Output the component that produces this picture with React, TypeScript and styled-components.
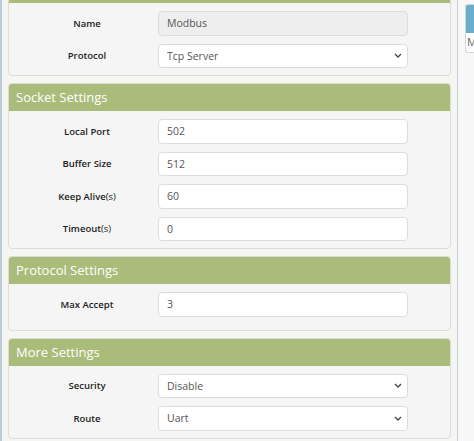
import styled, { createGlobalStyle } from 'styled-components';

const GlobalStyle = createGlobalStyle`
  html, body {
    margin: 0;
    padding: 0;
    background: #f5f6f1;
    font-family: 'Open Sans', 'Noto Sans', sans-serif;
    overflow: hidden;
  }
`;

interface Field {
  label: string;
  unit?: string;
  value: string;
  kind?: 'text' | 'select' | 'disabled';
}

interface Section {
  title: string;
  fields: Field[];
  extra?: boolean;
}

// first panel is scrolled up, only the bottom of its header shows
const sections: Section[] = [
  {
    title: '',
    fields: [
      { label: 'Name', value: 'Modbus', kind: 'disabled' },
      { label: 'Protocol', value: 'Tcp Server', kind: 'select' },
    ],
  },
  {
    title: 'Socket Settings',
    fields: [
      { label: 'Local Port', value: '502' },
      { label: 'Buffer Size', value: '512' },
      { label: 'Keep Alive', unit: '(s)', value: '60' },
      { label: 'Timeout', unit: '(s)', value: '0' },
    ],
  },
  {
    title: 'Protocol Settings',
    fields: [{ label: 'Max Accept', value: '3' }],
    extra: true,
  },
  {
    title: 'More Settings',
    fields: [
      { label: 'Security', value: 'Disable', kind: 'select' },
      { label: 'Route', value: 'Uart', kind: 'select' },
    ],
  },
];

function Chevron() {
  return (
    <svg width="8" height="5" viewBox="0 0 8 5" fill="none">
      <path d="M1 1l3 3 3-3" stroke="#444" strokeWidth="1.3" />
    </svg>
  );
}

function App() {
  return (
    <>
      <GlobalStyle />
      <Page>
        <LeftRule />
        <Main>
          {sections.map((section, i) => (
            <Panel key={i}>
              <PanelHeader>{section.title}</PanelHeader>
              <PanelBody extra={section.extra}>
                {section.fields.map((field) => (
                  <Row key={field.label}>
                    <Label>
                      {field.label}
                      {field.unit && <Unit>{field.unit}</Unit>}
                    </Label>
                    <Control disabled={field.kind === 'disabled'}>
                      <span>{field.value}</span>
                      {field.kind === 'select' && <Chevron />}
                    </Control>
                  </Row>
                ))}
              </PanelBody>
            </Panel>
          ))}
        </Main>
        <RightRule />
        <Side>
          <SideCard>
            <SideHeader />
            <SideBody>M</SideBody>
          </SideCard>
        </Side>
      </Page>
    </>
  );
}

export default App;

const Page = styled.div`
  display: flex;
  width: 474px;
  height: 441px;
  overflow: hidden;
`;

const LeftRule = styled.div`
  width: 2px;
  flex-shrink: 0;
  background: #bccbdc;
`;

const Main = styled.div`
  width: 443px;
  flex-shrink: 0;
  padding: 0 6px;
  margin-top: -25px;
`;

const RightRule = styled.div`
  width: 1px;
  flex-shrink: 0;
  background: #c3cfdd;
`;

const Side = styled.div`
  flex: 1;
  background: #f7f7f7;
  padding: 4px 0 0 7px;
`;

const SideCard = styled.div`
  border: 1px solid #cfd6de;
  border-right: none;
  border-radius: 3px 0 0 3px;
  background: #fff;
  overflow: hidden;
  height: 47px;
`;

const SideHeader = styled.div`
  height: 28px;
  background: #6aadc8;
`;

const SideBody = styled.div`
  padding: 1px 0 0 1px;
  font-size: 11px;
  color: #666;
`;

const Panel = styled.div`
  border: 1px solid #dcdcd8;
  border-radius: 4px;
  background: #f5f5f5;
  margin-bottom: 7px;
  overflow: hidden;
`;

const PanelHeader = styled.div`
  height: 27px;
  line-height: 27px;
  padding: 0 7px;
  background: #a9bc79;
  color: #fff;
  font-size: 13px;
`;

const PanelBody = styled.div<{ extra?: boolean }>`
  display: flex;
  flex-direction: column;
  gap: 8px;
  padding: 8px 8px ${(props) => (props.extra ? '13px' : '7px')};
`;

const Row = styled.div`
  display: flex;
  align-items: center;
`;

const Label = styled.div`
  width: 140px;
  margin-right: 1px;
  text-align: center;
  font-size: 9.5px;
  font-weight: 600;
  color: #222;
`;

const Unit = styled.span`
  font-weight: 400;
`;

const Control = styled.div<{ disabled?: boolean }>`
  width: 250px;
  height: 24.5px;
  box-sizing: border-box;
  display: flex;
  align-items: center;
  justify-content: space-between;
  padding: 0 5px 0 8px;
  border: 1px solid #dcdcdc;
  border-radius: 4px;
  background: ${(props) => (props.disabled ? '#eeeeee' : '#ffffff')};
  color: #555;
  font-size: 10.5px;
`;
